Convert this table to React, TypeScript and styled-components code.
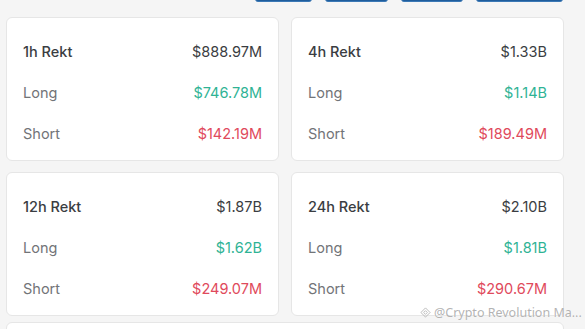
import React from "react";
import styled, { createGlobalStyle } from "styled-components";

const GlobalStyle = createGlobalStyle`
  html, body {
    margin: 0;
    padding: 0;
    background: #f5f5f5;
    overflow: hidden;
  }
  body {
    font-family: Inter, "Noto Sans", sans-serif;
  }
`;

const stats = [
  { title: "1h Rekt", total: "$888.97M", long: "$746.78M", short: "$142.19M" },
  { title: "4h Rekt", total: "$1.33B", long: "$1.14B", short: "$189.49M" },
  { title: "12h Rekt", total: "$1.87B", long: "$1.62B", short: "$249.07M" },
  { title: "24h Rekt", total: "$2.10B", long: "$1.81B", short: "$290.67M" },
];

const tabs = [57, 63, 62, 87];

function App() {
  return (
    <Page>
      <GlobalStyle />
      <Toolbar>
        {tabs.map((w, i) => (
          <Tab key={i} $width={w} />
        ))}
      </Toolbar>
      <Grid>
        {stats.map((item) => (
          <Card key={item.title}>
            <Row>
              <Title>{item.title}</Title>
              <Value>{item.total}</Value>
            </Row>
            <Row>
              <Label>Long</Label>
              <Value $tone="long">{item.long}</Value>
            </Row>
            <Row>
              <Label>Short</Label>
              <Value $tone="short">{item.short}</Value>
            </Row>
          </Card>
        ))}
      </Grid>
      <NextCard />
      <Watermark>
        <svg width="11" height="11" viewBox="0 0 12 12">
          <path
            d="M6 1 L11 6 L6 11 L1 6 Z M6 4 L8 6 L6 8 L4 6 Z"
            fill="none"
            stroke="#b8b8b8"
            strokeWidth="1"
          />
        </svg>
        <span>@Crypto Revolution Ma...</span>
      </Watermark>
    </Page>
  );
}

const Page = styled.div`
  position: relative;
  width: 585px;
  height: 329px;
  overflow: hidden;
`;

const Toolbar = styled.div`
  display: flex;
  justify-content: flex-end;
  gap: 13px;
  padding-right: 22px;
  margin-top: -28px;
  height: 30px;
`;

const Tab = styled.div<{ $width: number }>`
  width: ${(p) => p.$width}px;
  height: 30px;
  box-sizing: border-box;
  background: #1f5d9c;
  border: 1px solid #3b78b5;
  border-radius: 3px;
`;

const Grid = styled.div`
  display: grid;
  grid-template-columns: 273px 273px;
  grid-auto-rows: 144px;
  column-gap: 12px;
  row-gap: 11px;
  padding: 15px 0 0 6px;
`;

const Card = styled.div`
  box-sizing: border-box;
  background: #fff;
  border: 1px solid #e6e6e6;
  border-radius: 6px;
  padding: 23px 16px 16px 16px;
  display: flex;
  flex-direction: column;
  gap: 19px;
`;

const Row = styled.div`
  display: flex;
  justify-content: space-between;
  align-items: center;
  height: 22px;
  font-size: 14.5px;
`;

const Title = styled.span`
  color: #3a3d42;
  font-weight: 500;
`;

const Label = styled.span`
  color: #727478;
`;

const Value = styled.span<{ $tone?: "long" | "short" }>`
  color: ${(p) =>
    p.$tone === "long" ? "#2fb395" : p.$tone === "short" ? "#df4a5c" : "#3a3d42"};
`;

const NextCard = styled.div`
  margin: 6px 0 0 6px;
  width: 558px;
  height: 40px;
  box-sizing: border-box;
  background: #fff;
  border: 1px solid #e6e6e6;
  border-radius: 6px;
`;

const Watermark = styled.div`
  position: absolute;
  left: 420px;
  top: 304px;
  display: flex;
  align-items: center;
  gap: 3px;
  font-family: "Noto Sans", sans-serif;
  font-size: 12.5px;
  color: rgba(165, 165, 165, 0.85);
  text-shadow: 0 0 1px #fff;
  white-space: nowrap;
`;

export default App;
